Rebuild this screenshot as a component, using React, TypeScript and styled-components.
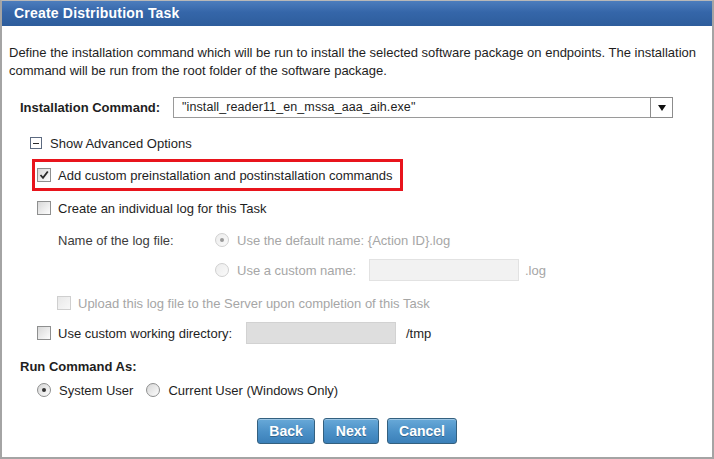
import styled, { createGlobalStyle } from 'styled-components';

const GlobalStyle = createGlobalStyle`
  html, body { margin: 0; padding: 0; background: #fff; }
  body { font-family: "Liberation Sans", Arial, sans-serif; font-size: 13px; color: #1e1e1e; }
`;

const Dialog = styled.div`
  box-sizing: border-box;
  width: 714px;
  height: 459px;
  border: 2px solid #a4a4a4;
  border-top: 1px solid #b8b8b8;
  background: #fff;
  display: flex;
  flex-direction: column;
`;

const TitleBar = styled.div`
  height: 25px;
  background: linear-gradient(#4c7dbd, #3566a9 45%, #2e5d9c);
  color: #fff;
  font-weight: bold;
  font-size: 14px;
  line-height: 25px;
  padding-left: 12px;
  letter-spacing: 0.2px;
`;

const Body = styled.div`
  padding: 0 0 0 7px;
  display: flex;
  flex-direction: column;
`;

const Intro = styled.p`
  margin: 18px 0 0;
  line-height: 18px;
  width: 700px;
`;

const Row = styled.div<{ $top: number; $h?: number; $indent?: number }>`
  display: flex;
  align-items: center;
  margin-top: ${p => p.$top}px;
  height: ${p => p.$h ?? 20}px;
  padding-left: ${p => p.$indent ?? 0}px;
`;

const BoldLabel = styled.span<{ $w?: number }>`
  font-weight: bold;
  width: ${p => (p.$w ? `${p.$w}px` : 'auto')};
`;

const Label = styled.span<{ $muted?: boolean; $dim?: boolean; $w?: number; $gap?: number }>`
  color: ${p => (p.$muted ? '#a6a6a6' : p.$dim ? '#3c3c3c' : '#1e1e1e')};
  width: ${p => (p.$w ? `${p.$w}px` : 'auto')};
  margin-left: ${p => p.$gap ?? 0}px;
  white-space: nowrap;
`;

const ComboInput = styled.div`
  box-sizing: border-box;
  width: 477px;
  height: 21px;
  border: 1px solid #9a9a9a;
  border-right: none;
  padding-left: 8px;
  line-height: 19px;
  font-size: 12.5px;
  letter-spacing: 0.1px;
`;

const ComboButton = styled.div`
  box-sizing: border-box;
  width: 23px;
  height: 21px;
  border: 1px solid #8c8c8c;
  background: #fff;
  display: flex;
  align-items: center;
  justify-content: center;
  &::after {
    content: '';
    border-left: 4px solid transparent;
    border-right: 4px solid transparent;
    border-top: 6px solid #111;
  }
`;

const TextBox = styled.div<{ $w: number; $h?: number; $bg?: string; $border?: string }>`
  box-sizing: border-box;
  width: ${p => p.$w}px;
  height: ${p => p.$h ?? 22}px;
  background: ${p => p.$bg ?? '#f2f2f2'};
  border: 1px solid ${p => p.$border ?? '#e2e2e2'};
`;

const Expander = styled.span`
  box-sizing: border-box;
  width: 12px;
  height: 12px;
  border: 1px solid #5c6a80;
  display: inline-flex;
  align-items: center;
  justify-content: center;
  margin-right: 8px;
  &::after {
    content: '';
    width: 6px;
    height: 1px;
    background: #2a2a2a;
  }
`;

const Check = styled.span<{ $disabled?: boolean }>`
  box-sizing: border-box;
  flex: none;
  width: 14px;
  height: 14px;
  border: 1px solid ${p => (p.$disabled ? '#cfcfcf' : '#8e8f8f')};
  background: ${p => (p.$disabled ? 'linear-gradient(135deg, #e8e8e8, #f8f8f8)' : 'linear-gradient(135deg, #d8d8d8, #fdfdfd)')};
  margin-right: 7px;
  display: inline-flex;
  align-items: center;
  justify-content: center;
`;

const Radio = styled.span<{ $checked?: boolean; $disabled?: boolean; $gap?: number }>`
  box-sizing: border-box;
  flex: none;
  width: 14px;
  height: 14px;
  border-radius: 50%;
  border: 1px solid ${p => (p.$disabled ? '#d0d0d0' : '#8e8f8f')};
  background: ${p => (p.$disabled ? 'linear-gradient(135deg, #ececec, #fafafa)' : 'linear-gradient(135deg, #d6d6d6, #fdfdfd)')};
  margin-left: ${p => p.$gap ?? 0}px;
  margin-right: 8px;
  display: inline-flex;
  align-items: center;
  justify-content: center;
  &::after {
    content: '';
    display: ${p => (p.$checked ? 'block' : 'none')};
    width: 4px;
    height: 4px;
    border-radius: 50%;
    background: ${p => (p.$disabled ? '#9a9a9a' : '#333')};
  }
`;

const Highlight = styled.div`
  box-sizing: border-box;
  margin: 6px 0 0 23px;
  width: 371px;
  height: 32px;
  border: 3px solid #e8141c;
  display: flex;
  align-items: center;
  padding-left: 2px;
`;

const ButtonBar = styled.div`
  display: flex;
  justify-content: center;
  gap: 8px;
  margin-top: 18px;
  padding-right: 7px;
`;

const Button = styled.button<{ $w: number }>`
  box-sizing: border-box;
  width: ${p => p.$w}px;
  height: 26px;
  border: 1px solid #34607f;
  border-radius: 3px;
  background: linear-gradient(#68a9d8, #4d92c8 50%, #3b80b9);
  box-shadow: inset 0 1px 0 rgba(255, 255, 255, 0.35);
  color: #fff;
  font-family: "Liberation Sans", Arial, sans-serif;
  font-weight: bold;
  font-size: 14px;
  text-shadow: 0 1px 0 rgba(0, 0, 0, 0.3);
  padding: 0;
  cursor: pointer;
`;

function CheckMark() {
  return (
    <svg width="10" height="10" viewBox="0 0 10 10">
      <path d="M1.5 5 L4 7.8 L8.8 1.5" fill="none" stroke="#2a2a2a" strokeWidth="1.8" />
    </svg>
  );
}

export default function App() {
  return (
    <>
      <GlobalStyle />
      <Dialog>
        <TitleBar>Create Distribution Task</TitleBar>
        <Body>
          <Intro>
            Define the installation command which will be run to install the selected software package on endpoints. The installation command will be run from the root folder of the software package.
          </Intro>

          <Row $top={17} $h={21} $indent={11}>
            <BoldLabel $w={153}>Installation Command:</BoldLabel>
            <ComboInput>"install_reader11_en_mssa_aaa_aih.exe"</ComboInput>
            <ComboButton />
          </Row>

          <Row $top={15} $indent={21}>
            <Expander />
            <Label>Show Advanced Options</Label>
          </Row>

          <Highlight>
            <Check><CheckMark /></Check>
            <Label>Add custom preinstallation and postinstallation commands</Label>
          </Highlight>

          <Row $top={7} $indent={28}>
            <Check />
            <Label>Create an individual log for this Task</Label>
          </Row>

          <Row $top={12} $indent={49}>
            <Label $dim $w={157}>Name of the log file:</Label>
            <Radio $checked $disabled />
            <Label $muted>Use the default name: {'{Action ID}'}.log</Label>
          </Row>

          <Row $top={9} $h={22} $indent={206}>
            <Radio $disabled />
            <Label $muted $w={132}>Use a custom name:</Label>
            <TextBox $w={150} />
            <Label $muted $gap={6}>.log</Label>
          </Row>

          <Row $top={12} $indent={48}>
            <Check $disabled />
            <Label $muted>Upload this log file to the Server upon completion of this Task</Label>
          </Row>

          <Row $top={9} $h={22} $indent={28}>
            <Check />
            <Label $w={188}>Use custom working directory:</Label>
            <TextBox $w={150} $bg="#dedede" $border="#d2d2d2" />
            <Label $gap={10}>/tmp</Label>
          </Row>

          <Row $top={12} $indent={11}>
            <BoldLabel>Run Command As:</BoldLabel>
          </Row>

          <Row $top={4} $indent={28}>
            <Radio $checked />
            <Label>System User</Label>
            <Radio $gap={13} />
            <Label>Current User (Windows Only)</Label>
          </Row>

          <ButtonBar>
            <Button $w={58}>Back</Button>
            <Button $w={56}>Next</Button>
            <Button $w={70}>Cancel</Button>
          </ButtonBar>
        </Body>
      </Dialog>
    </>
  );
}
